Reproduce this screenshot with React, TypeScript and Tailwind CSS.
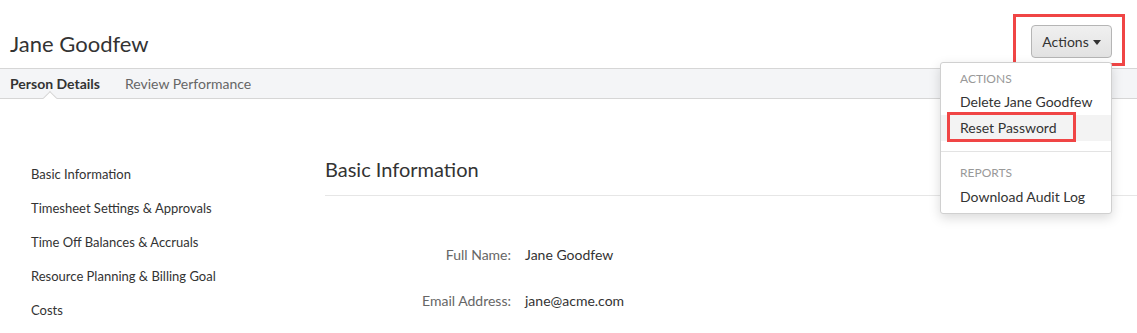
import React from "react";

const navItems = [
  "Basic Information",
  "Timesheet Settings & Approvals",
  "Time Off Balances & Accruals",
  "Resource Planning & Billing Goal",
  "Costs",
];

export default function App() {
  return (
    <div className="relative w-[1137px] h-[333px] overflow-hidden bg-white text-[#333] font-['Lato',sans-serif]">
      {/* Header */}
      <div className="flex h-[68px] items-start justify-between pl-[10px] pr-[25px]">
        <h1 className="mt-[32px] text-[22px] leading-[24px] text-[#333]">Jane Goodfew</h1>
        <button className="mt-[25px] flex h-[33px] w-[81px] items-center justify-center gap-[4px] rounded-[4px] border border-[#b5b5b5] bg-gradient-to-b from-[#f0f0f0] to-[#e2e2e2] text-[14px] text-[#333]">
          Actions
          <svg width="8" height="5" viewBox="0 0 8 5" className="mt-[1px]">
            <path d="M0 0 L8 0 L4 5 Z" fill="#333" />
          </svg>
        </button>
      </div>

      {/* Tabs */}
      <div className="relative flex h-[31px] items-center gap-[25px] border-y border-[#d6d6d6] bg-[#f4f5f7] pl-[10px] text-[14px]">
        <div className="relative font-bold text-[#333]">
          Person Details
          <div className="absolute left-[35px] top-[20px] h-[10px] w-[10px] rotate-45 border-l border-t border-[#d6d6d6] bg-white" />
        </div>
        <div className="text-[#666]">Review Performance</div>
      </div>

      {/* Body */}
      <div className="flex pt-[58px]">
        <ul className="w-[325px] shrink-0 pl-[31px] text-[13px] text-[#333]">
          {navItems.map((n) => (
            <li key={n} className="h-[34px] leading-[34px]">
              {n}
            </li>
          ))}
        </ul>
        <div className="flex-1">
          <div className="border-b border-[#e6e6e6] pb-[14px] pt-0 text-[20px] leading-[24px] text-[#333]">
            Basic Information
          </div>
          <div className="pt-[35px] text-[14px]">
            <div className="flex h-[46px] items-center">
              <div className="w-[186px] text-right text-[#666]">Full Name:</div>
              <div className="pl-[14px] text-[#333]">Jane Goodfew</div>
            </div>
            <div className="flex h-[46px] items-center">
              <div className="w-[186px] text-right text-[#666]">Email Address:</div>
              <div className="pl-[14px] text-[#333]">jane@acme.com</div>
            </div>
          </div>
        </div>
      </div>

      {/* Red highlight around Actions button */}
      <div className="absolute left-[1013px] top-[14px] h-[52px] w-[112px] border-[3px] border-[#f04545]" />

      {/* Dropdown */}
      <div className="absolute left-[940px] top-[62px] w-[172px] whitespace-nowrap rounded-[3px] border border-[#d0d0d0] bg-white pt-[5px] pb-[3px] shadow-[0_4px_12px_rgba(0,0,0,0.15)]">
        <div className="px-[19px] text-[12px] leading-[21px] text-[#999]">ACTIONS</div>
        <div className="px-[19px] text-[14px] leading-[26px] text-[#333]">Delete Jane Goodfew</div>
        <div className="bg-[#f3f3f3] px-[19px] text-[14px] leading-[26px] text-[#333]">Reset Password</div>
        <div className="mt-[10px] mb-[10px] h-px bg-[#e3e3e3]" />
        <div className="px-[19px] text-[12px] leading-[22px] text-[#999]">REPORTS</div>
        <div className="px-[19px] text-[14px] leading-[26px] text-[#333]">Download Audit Log</div>
      </div>

      {/* Red highlight around Reset Password */}
      <div className="absolute left-[947px] top-[112px] h-[30px] w-[129px] border-[3px] border-[#f04545]" />
    </div>
  );
}
